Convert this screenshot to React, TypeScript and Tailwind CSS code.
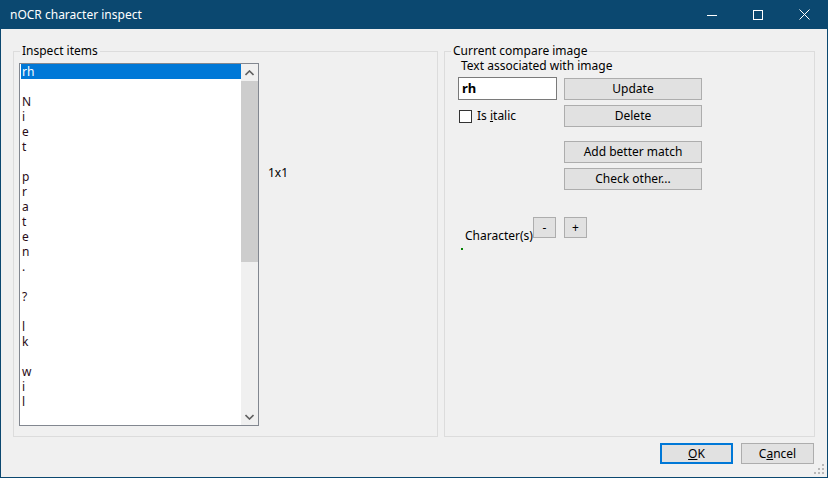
import type { ReactNode } from "react";

const ITEMS = [
  "rh", "", "N", "i", "e", "t", "", "p", "r", "a", "t", "e", "n", ".", "",
  "?", "", "l", "k", "", "w", "i", "l",
];

function GroupBox({
  title,
  className = "",
  children,
}: {
  title: string;
  className?: string;
  children: ReactNode;
}) {
  return (
    <div className={`relative border border-[#dcdcdc] ${className}`}>
      <span className="absolute -top-[9px] left-[6px] bg-[#f0f0f0] px-[2px] leading-[16px] text-black">
        {title}
      </span>
      {children}
    </div>
  );
}

function Button({
  children,
  className = "",
  primary = false,
}: {
  children: ReactNode;
  className?: string;
  primary?: boolean;
}) {
  return (
    <button
      className={`flex items-center justify-center bg-[#e1e1e1] leading-none text-black ${
        primary ? "border-2 border-[#0078d7]" : "border border-[#adadad]"
      } ${className}`}
    >
      {children}
    </button>
  );
}

function TitleBar() {
  return (
    <div className="flex h-[31px] items-center bg-[#0b4870] text-white">
      <span className="pl-[9px] text-[12px]">nOCR character inspect</span>
      <div className="ml-auto flex h-full">
        <div className="flex w-[46px] items-center justify-center">
          <svg width="10" height="10" viewBox="0 0 10 10">
            <path d="M0 5.5h10" stroke="white" strokeWidth="1" />
          </svg>
        </div>
        <div className="flex w-[46px] items-center justify-center">
          <svg width="10" height="10" viewBox="0 0 10 10">
            <rect x="0.5" y="0.5" width="9" height="9" fill="none" stroke="white" strokeWidth="1" />
          </svg>
        </div>
        <div className="flex w-[46px] items-center justify-center">
          <svg width="11" height="11" viewBox="0 0 11 11">
            <path d="M0.5 0.5l10 10M10.5 0.5l-10 10" stroke="white" strokeWidth="1" />
          </svg>
        </div>
      </div>
    </div>
  );
}

function ListBox() {
  return (
    <div className="flex h-[363px] w-[240px] border border-[#828790] bg-white">
      <div className="flex-1 pl-[1px]">
        {ITEMS.map((item, i) => (
          <div
            key={i}
            className={`h-[15px] overflow-hidden pl-[1px] text-[12px] leading-[15px] ${
              i === 0 ? "bg-[#0078d7] text-white" : "text-[#2a0c16]"
            }`}
          >
            {item}
          </div>
        ))}
      </div>
      <div className="flex w-[17px] flex-col bg-[#f0f0f0]">
        <div className="flex h-[17px] items-center justify-center">
          <svg width="9" height="6" viewBox="0 0 9 6">
            <path d="M0.5 5l4-4 4 4" fill="none" stroke="#606060" strokeWidth="1.6" />
          </svg>
        </div>
        <div className="h-[181px] bg-[#cdcdcd]" />
        <div className="flex-1" />
        <div className="flex h-[17px] items-center justify-center">
          <svg width="9" height="6" viewBox="0 0 9 6">
            <path d="M0.5 1l4 4 4-4" fill="none" stroke="#606060" strokeWidth="1.6" />
          </svg>
        </div>
      </div>
    </div>
  );
}

export default function App() {
  return (
    <div
      className="flex h-[478px] w-[828px] flex-col overflow-hidden border border-t-0 border-[#0b4870] bg-[#f0f0f0] text-[12px] text-black"
      style={{ fontFamily: '"Noto Sans", "Liberation Sans", sans-serif' }}
    >
      <TitleBar />
      <div className="flex gap-[6px] pl-[12px] pt-[22px]">
        <GroupBox title="Inspect items" className="h-[386px] w-[425px]">
          <div className="flex pl-[5px] pt-[11px]">
            <ListBox />
            <span className="ml-[9px] mt-[101px]">1x1</span>
          </div>
        </GroupBox>
        <GroupBox title="Current compare image" className="h-[386px] w-[371px]">
          <div className="flex flex-col pl-[13px] pt-[6px]">
            <span className="pl-[3px] leading-[16px]">Text associated with image</span>
            <div className="mt-[3px] flex gap-[7px]">
              <div className="flex w-[99px] flex-col">
                <div className="flex h-[23px] items-center border border-[#7a7a7a] bg-white pl-[3px] text-[13px] font-bold">
                  rh
                </div>
                <label className="mt-[7px] flex items-center gap-[5px] pl-[1px]">
                  <span className="h-[13px] w-[13px] border border-[#333333] bg-white" />
                  <span>
                    Is <span className="underline">i</span>talic
                  </span>
                </label>
              </div>
              <div className="mt-[1px] flex flex-col">
                <Button className="h-[22px] w-[138px]">Update</Button>
                <Button className="mt-[5px] h-[22px] w-[138px]">Delete</Button>
                <Button className="mt-[14px] h-[22px] w-[138px]">Add better match</Button>
                <Button className="mt-[5px] h-[22px] w-[138px]">Check other...</Button>
              </div>
            </div>
            <div className="mt-[27px] flex items-start">
              <span className="ml-[7px] mt-[10px]">Character(s)</span>
              <Button className="ml-0 h-[21px] w-[23px]">-</Button>
              <Button className="ml-[8px] h-[21px] w-[23px]">+</Button>
            </div>
            <div className="ml-[3px] mt-[3px] h-[2px] w-[2px] bg-[#008000]" />
          </div>
        </GroupBox>
      </div>
      <div className="flex justify-end gap-[8px] pr-[13px] pt-[6px]">
        <Button primary className="h-[21px] w-[73px]">
          <span className="underline">O</span>K
        </Button>
        <Button className="h-[21px] w-[73px]">
          C<span className="underline">a</span>ncel
        </Button>
      </div>
      <div className="mt-auto flex justify-end pb-[3px] pr-[3px]">
        <svg width="10" height="10" viewBox="0 0 10 10">
          <rect x="8" y="0" width="2" height="2" fill="#b8b8b8" />
          <rect x="4" y="4" width="2" height="2" fill="#b8b8b8" />
          <rect x="8" y="4" width="2" height="2" fill="#b8b8b8" />
          <rect x="0" y="8" width="2" height="2" fill="#b8b8b8" />
          <rect x="4" y="8" width="2" height="2" fill="#b8b8b8" />
          <rect x="8" y="8" width="2" height="2" fill="#b8b8b8" />
        </svg>
      </div>
    </div>
  );
}
